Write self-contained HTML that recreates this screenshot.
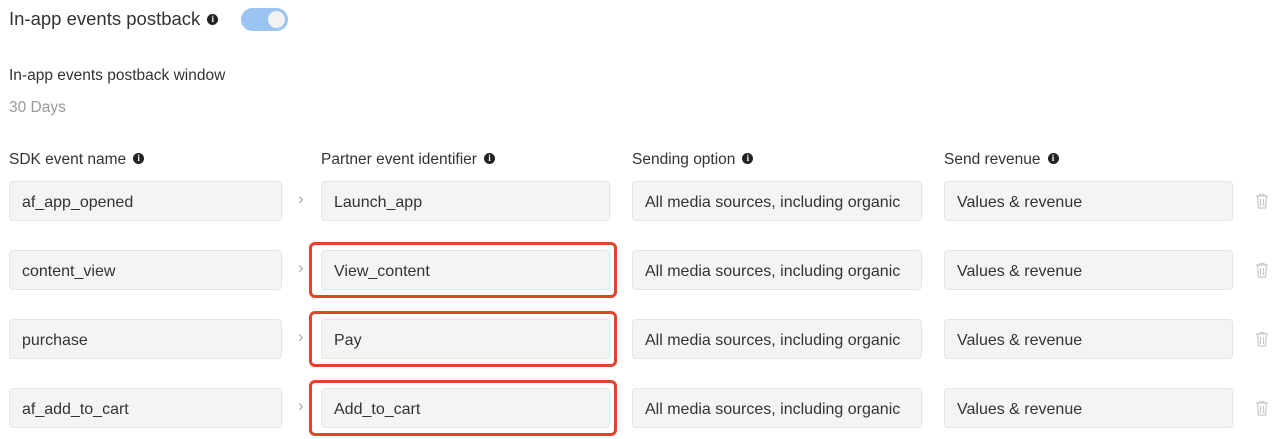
<!DOCTYPE html>
<html><head><style>
body{margin:0;width:1280px;height:439px;background:#fff;font-family:"Liberation Sans",sans-serif;color:#333;position:relative;overflow:hidden}
.a{position:absolute;white-space:nowrap}
.i{display:inline-block;width:11px;height:11px;border-radius:50%;background:#222;color:#fff;font:bold 9px/11px "Liberation Serif",serif;text-align:center;vertical-align:3px;margin-left:7px}
.f{position:absolute;height:38px;background:#f3f4f6;border:1px solid #e3e5e8;border-radius:4px;font-size:16px;line-height:41px;padding-left:12px;box-sizing:content-box;color:#333}
.r{position:absolute;left:309px;width:302px;height:50px;border:3px solid #e0452b;border-radius:6px}
.ch{position:absolute;left:298px;color:#aaa;font-size:17px}
</style></head><body>
<div class="a" style="left:9px;top:8px;font-size:18.5px">In-app events postback<span class="i">i</span></div>
<div class="a" style="left:241px;top:8px;width:47px;height:23px;border-radius:12px;background:#9cc4f2"><div style="position:absolute;right:3px;top:3px;width:17px;height:17px;border-radius:50%;background:#f2f2f2"></div></div>
<div class="a" style="left:9px;top:67px;font-size:15.5px">In-app events postback window</div>
<div class="a" style="left:9px;top:99px;font-size:15.5px;color:#999">30 Days</div>
<div class="a" style="left:9px;top:151px;font-size:15.5px">SDK event name<span class="i">i</span></div>
<div class="a" style="left:321px;top:151px;font-size:15.5px">Partner event identifier<span class="i">i</span></div>
<div class="a" style="left:632px;top:151px;font-size:15.5px">Sending option<span class="i">i</span></div>
<div class="a" style="left:944px;top:151px;font-size:15.5px">Send revenue<span class="i">i</span></div>

<div class="f" style="left:9px;top:181px;width:259px">af_app_opened</div>
<div class="f" style="left:321px;top:181px;width:275px">Launch_app</div>
<div class="f" style="left:632px;top:181px;width:276px">All media sources, including organic</div>
<div class="f" style="left:944px;top:181px;width:275px">Values &amp; revenue</div>

<div class="f" style="left:9px;top:250px;width:259px">content_view</div>
<div class="f" style="left:321px;top:250px;width:275px">View_content</div>
<div class="f" style="left:632px;top:250px;width:276px">All media sources, including organic</div>
<div class="f" style="left:944px;top:250px;width:275px">Values &amp; revenue</div>

<div class="f" style="left:9px;top:319px;width:259px">purchase</div>
<div class="f" style="left:321px;top:319px;width:275px">Pay</div>
<div class="f" style="left:632px;top:319px;width:276px">All media sources, including organic</div>
<div class="f" style="left:944px;top:319px;width:275px">Values &amp; revenue</div>

<div class="f" style="left:9px;top:388px;width:259px">af_add_to_cart</div>
<div class="f" style="left:321px;top:388px;width:275px">Add_to_cart</div>
<div class="f" style="left:632px;top:388px;width:276px">All media sources, including organic</div>
<div class="f" style="left:944px;top:388px;width:275px">Values &amp; revenue</div>

<div class="r" style="top:242px"></div>
<div class="r" style="top:311px"></div>
<div class="r" style="top:380px"></div>

<div class="ch" style="top:189px">›</div><div class="ch" style="top:258px">›</div><div class="ch" style="top:327px">›</div><div class="ch" style="top:396px">›</div>

<svg class="a" style="left:1255px;top:193px" width="14" height="16" viewBox="0 0 14 16" fill="none" stroke="#c8c8c8" stroke-width="1.2"><path d="M1 3h12M5 3V1.5h4V3M2.5 3l1 12h7l1-12M5.5 6v7M8.5 6v7"/></svg>
<svg class="a" style="left:1255px;top:262px" width="14" height="16" viewBox="0 0 14 16" fill="none" stroke="#c8c8c8" stroke-width="1.2"><path d="M1 3h12M5 3V1.5h4V3M2.5 3l1 12h7l1-12M5.5 6v7M8.5 6v7"/></svg>
<svg class="a" style="left:1255px;top:331px" width="14" height="16" viewBox="0 0 14 16" fill="none" stroke="#c8c8c8" stroke-width="1.2"><path d="M1 3h12M5 3V1.5h4V3M2.5 3l1 12h7l1-12M5.5 6v7M8.5 6v7"/></svg>
<svg class="a" style="left:1255px;top:400px" width="14" height="16" viewBox="0 0 14 16" fill="none" stroke="#c8c8c8" stroke-width="1.2"><path d="M1 3h12M5 3V1.5h4V3M2.5 3l1 12h7l1-12M5.5 6v7M8.5 6v7"/></svg>
</body></html>
